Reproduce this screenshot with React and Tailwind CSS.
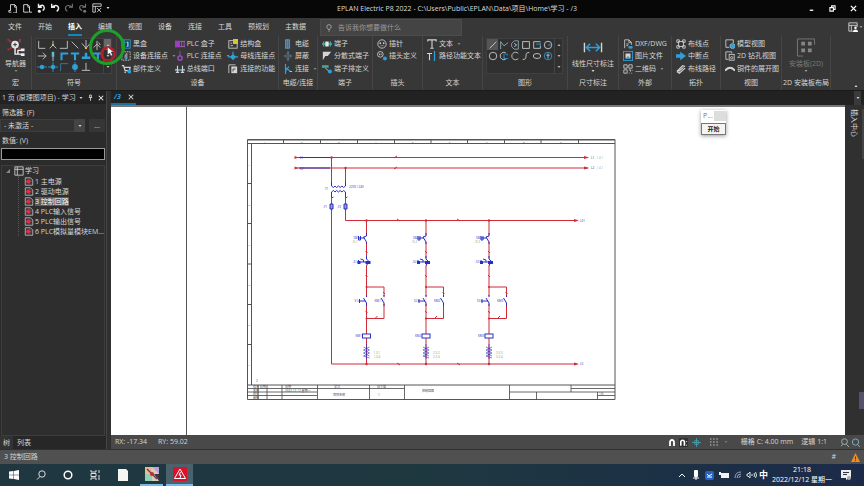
import { useState } from "react";

const menuTabs = ["文件", "开始", "插入", "编辑", "视图", "设备", "连接", "工具", "预规划", "主数据"];

const pages = ["1 主电源", "2 驱动电源", "3 控制回路", "4 PLC输入信号", "5 PLC输出信号", "6 PLC模拟量模块EM..."];

const W = "#d4d4d4";
const B = "#2f9fd8";

// small ribbon glyphs, drawn on a 12 x 12 grid
const glyphs = {
  blackbox: <><rect x="1" y="1" width="10" height="10" stroke={B} /><path d="M4 1v10M4 4h5v5H6" stroke={B} /><path d="M8 3v6" stroke={W} /></>,
  devpoint: <><path d="M1 1h10v10H1z" stroke={W} strokeDasharray="2 1" /><path d="M5 9V5l2-2v6" stroke={W} /><circle cx="6" cy="9" r="1.5" fill={B} stroke="none" /></>,
  part: <><path d="M1 2h2l2 6h5l1-4H4" stroke={W} strokeWidth="1.5" /><circle cx="5" cy="10" r="1" fill={W} stroke="none" /><circle cx="10" cy="9" r="2.4" fill={B} stroke="none" /></>,
  plc: <><rect x="0" y="2" width="6" height="8" fill="#9b3fc0" stroke="none" /><path d="M8 2v8M11 2v8M6 3h6M6 9h6" stroke="#a85cc4" /></>,
  plcpoint: <><path d="M6 0v6" stroke="#a24cc4" /><circle cx="6" cy="8.5" r="2.6" stroke="#a24cc4" strokeWidth="1.6" /></>,
  bus: <><path d="M0 7h12M3 2v8M9 2v8M1 10h4M7 10h4" stroke={W} strokeWidth="1.4" /><path d="M4 7h4" stroke={B} strokeWidth="2" /></>,
  struct: <><rect x="1" y="2" width="10" height="9" stroke={W} /><rect x="6" y="0" width="6" height="6" fill="#d8c437" stroke="none" /><path d="M3 8h3M3 5h2" stroke={W} /></>,
  busbar: <><path d="M0 7h12M6 1v6" stroke={B} strokeWidth="1.5" /><path d="M2 7l4-3 4 3-4 4z" fill={B} stroke="none" /></>,
  func: <><path d="M1 11V1h8" stroke={W} /><rect x="4" y="3" width="7" height="8" fill={W} stroke="none" /><path d="M6 9V6h3" stroke="#333" /></>,
  cable: <><rect x="3" y="1" width="5" height="10" fill="#4d6f8c" stroke="#6f93ad" /><path d="M5.500 0v12" stroke={B} /></>,
  shield: <><path d="M6 0v12M1 6h3M8 6h3" stroke="#6a93b5" /><ellipse cx="6" cy="6" rx="2.500" ry="4" stroke="#5f7f96" strokeDasharray="2 1" /></>,
  conn: <><path d="M3 0v12M3 4l6 5M7 3l-4 6" stroke={B} strokeWidth="1.4" /><path d="M8 9h3" stroke={W} /></>,
  term: <><path d="M0 6h12" stroke="#4aa99c" strokeWidth="2" /><rect x="4" y="3" width="4" height="6" fill="#dfeee9" stroke="none" /><path d="M2 3v6M10 3v6" stroke="#4aa99c" strokeWidth="1.6" /></>,
  dterm: <path d="M1 11V1h10L7 6H4z" fill={W} stroke="none" />,
  termdef: <><path d="M0 3h8" stroke="#4aa99c" strokeWidth="3" /><path d="M4 5l5 4" stroke={W} /><circle cx="9.500" cy="9" r="2.400" fill={B} stroke="none" /></>,
  pin: <><circle cx="6" cy="6" r="5" stroke={W} /><circle cx="4" cy="5" r="1" fill={W} stroke="none" /><circle cx="8" cy="5" r="1" fill={W} stroke="none" /><path d="M4 8h4" stroke="#70b070" /></>,
  plugdef: <><circle cx="4" cy="4" r="3.400" stroke={W} /><path d="M3 3v2M5 3v2" stroke={W} /><circle cx="9.500" cy="9" r="2.400" fill={B} stroke="none" /></>,
  text: <path d="M1 3V1h10v2M6 1v10M4 11h4" stroke={W} strokeWidth="1.3" />,
  pathtext: <><path d="M0 3h6M3 3v8" stroke={W} strokeWidth="1.3" /><path d="M9 0v12" stroke={B} strokeWidth="1.500" /></>,
  dxf: <><path d="M2 11V1h5l3 3v3M7 1v3h3M4 6h3M4 8h2" stroke={W} /><path d="M7 9h4v2H7z" fill={B} stroke={B} /></>,
  image: <><rect x="0.500" y="0.500" width="11" height="11" stroke={B} /><rect x="3" y="3" width="6" height="6" fill={W} stroke="none" /><path d="M3 9l3-3 3 3z" fill={B} stroke="none" /></>,
  qr: <path d="M1 1h4v4H1zM7 1h4v4H7zM1 7h4v4H1zM7 7h2v2M11 7v1M7 11h1M10 11h1" stroke={W} />,
  route: <><path d="M3 3h6v6H3z" stroke={W} /><path d="M1 1h3v3H1zM8 1h3v3H8zM1 8h3v3H1zM8 8h3v3H8z" stroke={W} /></>,
  breakpt: <path d="M0 4h5V1l7 5-7 5V8H0z" fill={B} stroke="none" />,
  path: <path d="M1 9l7-7 3 1M1 9l3 2 7-6M3 9l6-5" stroke={W} strokeWidth="1.4" />,
  model: <><path d="M10 5V1H1v9h4" stroke={W} /><path d="M6 7l3-2 3 2v3l-3 2-3-2z" fill={B} stroke={W} strokeWidth="0.600" /></>,
  drill: <><path d="M8 3V1H1v9h3" stroke={W} /><rect x="5" y="4" width="6" height="7" stroke={W} /><circle cx="8" cy="8" r="1.300" stroke={W} /></>,
  copper: <path d="M0 8q6-7 12 0" stroke={W} strokeWidth="2.200" />,
};

const Glyph = ({ name }) => (
  <svg viewBox="0 0 12 12" className="h-[10px] w-[10px] shrink-0" fill="none" aria-hidden="true">
    {glyphs[name]}
  </svg>
);

const Caret = ({ className = "" }) => (
  <svg viewBox="0 0 6 4" className={`h-[2px] w-[4px] shrink-0 ${className}`} aria-hidden="true">
    <path d="M0 0h6L3 4z" fill="currentColor" />
  </svg>
);

const Tool = ({ icon, label, caret }) => (
  <button className="flex items-center gap-[2px] whitespace-nowrap text-left">
    <Glyph name={icon} />
    <span>{label}</span>
    {caret && <Caret className="ml-[2px] text-[#888]" />}
  </button>
);

const Group = ({ label, children }) => (
  <section className="flex min-w-0 flex-col border-r border-[#464646] pt-[2px]">
    <div className="h-[37px]">{children}</div>
    <div className="pt-[3px] text-center leading-[10px] whitespace-nowrap">{label}</div>
  </section>
);

const ToolColumn = ({ tools }) => (
  <div className="grid h-full grid-rows-3 pl-[4px]">
    {tools.map(([icon, label, caret]) => (
      <Tool key={label} icon={icon} label={label} caret={caret} />
    ))}
  </div>
);

const symbols = [
  <path d="M2 1v9h8" stroke={W} />,
  <><path d="M6 1v5l-4 4M6 6l4 4" stroke={W} /><circle cx="6" cy="6" r="1.300" fill="#ddc65e" stroke="none" /></>,
  <path d="M10 1v9H1" stroke={W} />,
  <path d="M2 2l8 8" stroke={W} />,
  <><path d="M6 0v10M1 4l5 6 5-6" stroke={W} /><circle cx="6" cy="10" r="1.200" fill="#ddc65e" stroke="none" /></>,
  <path d="M6 1v11M2 9l4-4 4 4M8 3l2 3" stroke={W} />,
  <path d="M1 6h10M7 2l4 4-4 4" stroke={W} />,
  <><path d="M6 1v6" stroke="#62bdd0" strokeWidth="3" /><path d="M6 7v5" stroke={W} /></>,
  <path d="M11 3H3v8" stroke={B} strokeWidth="2.500" />,
  <path d="M1 3h10M6 3v8" stroke={B} strokeWidth="2.500" />,
  <path d="M1 8h10M6 2v6" stroke={B} strokeWidth="3" />,
  <path d="M1 3h10M7 3v8" stroke={B} strokeWidth="2.500" />,
  <><path d="M0 6h12" stroke={B} /><circle cx="6" cy="6" r="2.700" fill={B} stroke="none" /></>,
  <><path d="M0 6h12M6 0v12" stroke={B} /><circle cx="6" cy="6" r="2.700" fill={B} stroke="none" /></>,
  <path d="M2 11V2h9" stroke="#3986a8" />,
  <><path d="M6 0v12" stroke={B} /><circle cx="6" cy="6" r="3.500" fill={B} stroke="none" /></>,
  <path d="M6 1v9M1 10h10" stroke={W} />,
];

const shapes = [
  <path d="M2 10l8-8" stroke={W} />,
  <path d="M2 11V2l4 5 5-4" stroke="#8fb6c4" />,
  <><path d="M10 1v10H5L2 8V4l3-3z" stroke="#8ab5c8" /><path d="M5 4l3 2-3 2" stroke={W} /></>,
  <rect x="2" y="2" width="8" height="8" stroke={W} />,
  <><path d="M10 2H2v8h8V7" stroke={W} /><path d="M5 5h5M10 3v4" stroke={B} /></>,
  <><circle cx="6" cy="6" r="4.500" stroke={W} /><path d="M6 6h5" stroke={B} /></>,
  <circle cx="6" cy="6" r="4.500" stroke={W} />,
  <><path d="M8 2a4.500 4.500 0 1 0 0 8" stroke={W} /><path d="M6 3v6h5M7 3l4 2" stroke={B} /></>,
  <path d="M10 3a4.500 4.500 0 1 0 0 6" stroke={W} />,
  <path d="M2 10q4 1 4-4t4-4" stroke={W} />,
  <ellipse cx="6" cy="6" rx="4.500" ry="3" stroke={W} />,
  <><circle cx="6" cy="6" r="4.500" stroke={B} /><path d="M6 3v6M4 5h4" stroke="#b8d2dc" /></>,
];

const Gallery = ({ items, label, activeUp, activeFirst }) => (
  <div className="mr-[4px] ml-[3px] flex h-[36px] border border-[#404040] bg-[#303030]">
    <div className="grid flex-1 grid-cols-6 grid-rows-3">
      {items.map((item, i) => (
        <button
          key={i}
          aria-label={`${label} ${i + 1}`}
          className={`flex items-center justify-center ${activeFirst && i === 0 ? "bg-[#555]" : ""}`}
        >
          <svg viewBox="0 0 12 12" className="h-[10px] w-[10px]" fill="none">{item}</svg>
        </button>
      ))}
    </div>
    <div className="grid w-[8px] grid-rows-3 border-l border-[#444] text-[#bbb]">
      <button aria-label={`${label}上`} className={`flex items-center justify-center ${activeUp ? "bg-[#686868]" : ""}`}><Caret className="rotate-180" /></button>
      <button aria-label={`${label}下`} className="flex items-center justify-center"><Caret /></button>
      <button aria-label={`${label}更多`} className="flex items-center justify-center"><Caret /></button>
    </div>
  </div>
);

const quickIcons = [
  ["新建", <path d="M4 11H1V9h2V2h5l2 2v8H6M8 2v3h2" stroke="#eee" />],
  ["打开", <path d="M8 11H2V2h5l2 2v7M9 11h3M7 2v3h2" stroke="#eee" />],
  ["撤消列表", <><path d="M3 1v4h4M3 5q6-5 7 1 0 2-2 3" stroke="#eee" strokeWidth="1.700" /><circle cx="4" cy="10" r="1.800" fill="#eee" /></>],
  ["撤消", <path d="M2 1v4h4M2 5q6-4 8 0 1 3-2 5" stroke="#eee" strokeWidth="1.700" />],
  ["恢复", <path d="M10 1v4H6M10 5Q4 1 2 5q-1 3 2 5" stroke="#777" strokeWidth="1.300" />],
  ["恢复列表", <><path d="M9 1v4H5M9 5Q3 1 2 5q0 3 3 4" stroke="#777" strokeWidth="1.300" /><circle cx="8" cy="10" r="1.800" fill="#777" /></>],
  ["属性", <path d="M11 4V1H1v10h3M1 4h10M4 4v7M6 6l5 5M11 6l-5 5" stroke="#ddd" />],
];

const TitleBar = () => (
  <header className="flex h-[18px] shrink-0 items-center bg-[#070707] pb-[2px] text-[#dcdcdc]">
    <div className="flex w-[248px] items-center gap-[4px] pl-[8px]">
      {quickIcons.map(([label, art]) => (
        <button key={label} aria-label={label}>
          <svg viewBox="0 0 12 12" className="h-[10px] w-[10px]" fill="none">{art}</svg>
        </button>
      ))}
      <Caret />
    </div>
    <h1 className="flex-1 pt-[2px] text-center whitespace-nowrap">
      EPLAN Electric P8 2022 - C:\Users\Public\EPLAN\Data\项目\Home\学习 - /3
    </h1>
    <div className="flex w-[198px] items-center justify-end gap-[14px] pr-[7px]">
      <button aria-label="最小化"><svg viewBox="0 0 8 8" className="h-[7px] w-[7px]"><path d="M2 6h4" stroke="#fff" strokeWidth="1.500" /></svg></button>
      <button aria-label="还原"><svg viewBox="0 0 8 8" className="h-[7px] w-[7px]" fill="none"><path d="M3 3V1h4v4H5M1 3h4v4H1z" stroke="#fff" strokeWidth="1.200" /></svg></button>
      <button aria-label="关闭"><svg viewBox="0 0 8 8" className="h-[7px] w-[7px]"><path d="M1 1l6 6M7 1L1 7" stroke="#fff" strokeWidth="1.500" /></svg></button>
    </div>
  </header>
);

const MenuBar = ({ active, onSelect }) => (
  <div className="flex h-[18px] shrink-0 items-stretch bg-[#373737]">
    <nav className="flex gap-[16px] pr-[14px] pl-[8px]">
      {menuTabs.map((tab) => (
        <button
          key={tab}
          onClick={() => onSelect(tab)}
          className={`border-b-2 pt-px whitespace-nowrap ${tab === active ? "border-[#1684c4] font-bold text-white" : "border-transparent"}`}
        >
          {tab}
        </button>
      ))}
    </nav>
    <label className="mt-px flex w-[142px] items-center gap-[6px] border border-[#4c4c4c] bg-[#444] pl-[5px]">
      <svg viewBox="0 0 8 10" className="h-[8px] w-[6px]" fill="none"><path d="M3 7V6Q1 5 1 3.500a3 3 0 0 1 6 0Q7 5 5 6v1zM3 9h2" stroke="#bbb" /></svg>
      <input aria-label="搜索" placeholder="告诉我你想要做什么" className="min-w-0 flex-1 bg-transparent outline-none placeholder:text-[#9a9a9a]" />
    </label>
    <button aria-label="工作区域" className="ml-auto flex items-center gap-px pr-px text-[#999]">
      <svg viewBox="0 0 12 12" className="h-[10px] w-[10px]" fill="none"><path d="M1 1h10v5M1 1v10h5M1 4h10M4 4v7" stroke="#ddd" /><circle cx="9" cy="7" r="1.500" fill="#fff" /><path d="M6 12q0-3 3-3t3 3z" fill="#fff" /></svg>
      <Caret />
    </button>
  </div>
);

const Ribbon = () => (
  <div className="relative grid h-[54px] shrink-0 grid-cols-[32fr_85fr_162fr_39fr_55fr_50fr_60fr_85fr_51fr_53fr_49fr_61fr_49fr_33fr] bg-[#373737]">
    <Group label="宏">
      <button className="flex h-full w-full flex-col items-center">
        <svg viewBox="0 0 20 20" className="h-[19px] w-[20px]" fill="none">
          <path d="M1 2h3M13 2h3M1 12h3M3 3l12 9M15 3L3 12" stroke="#b52d39" strokeWidth="2" strokeDasharray="2 2" />
          <circle cx="9" cy="7" r="4" fill="#e5e5e5" /><path d="M7 7h4M9 5v4" stroke="#333" />
          <path d="M9 10v7h6M12 17v-4h4" stroke="#eee" strokeWidth="1.500" />
          <path d="M15 11h4v3h-4zM15 16h4v3h-4z" fill="#eee" />
        </svg>
        <span className="mt-[2px] whitespace-nowrap leading-[9px]">导航器</span>
        <Caret className="mt-[2px] text-[#888]" />
      </button>
    </Group>
    <Group label="符号"><Gallery items={symbols} label="符号" activeUp /></Group>
    <Group label="设备">
      <div className="grid h-full grid-cols-3">
        <ToolColumn tools={[["blackbox", "黑盒"], ["devpoint", "设备连接点", true], ["part", "部件定义"]]} />
        <ToolColumn tools={[["plc", "PLC 盒子"], ["plcpoint", "PLC 连接点", true], ["bus", "总线端口"]]} />
        <ToolColumn tools={[["struct", "结构盒"], ["busbar", "母线连接点"], ["func", "连接的功能"]]} />
      </div>
    </Group>
    <Group label="电缆/连接">
      <ToolColumn tools={[["cable", "电缆"], ["shield", "屏蔽"], ["conn", "连接", true]]} />
    </Group>
    <Group label="端子">
      <ToolColumn tools={[["term", "端子"], ["dterm", "分散式端子"], ["termdef", "端子排定义"]]} />
    </Group>
    <Group label="插头">
      <ToolColumn tools={[["pin", "插针"], ["plugdef", "插头定义"]]} />
    </Group>
    <Group label="文本">
      <ToolColumn tools={[["text", "文本", true], ["pathtext", "路径功能文本"]]} />
    </Group>
    <Group label="图形"><Gallery items={shapes} label="图形" activeFirst /></Group>
    <Group label="尺寸标注">
      <button className="flex h-full w-full flex-col items-center">
        <svg viewBox="0 0 20 20" className="h-[19px] w-[20px]" fill="none">
          <path d="M1 5v10M19 5v10" stroke={W} strokeWidth="1.500" />
          <path d="M3 10h14M7 6l-4 4 4 4M13 6l4 4-4 4" stroke={B} strokeWidth="1.600" />
        </svg>
        <span className="mt-[2px] whitespace-nowrap leading-[9px]">线性尺寸标注</span>
        <Caret className="mt-[2px]" />
      </button>
    </Group>
    <Group label="外部">
      <ToolColumn tools={[["dxf", "DXF/DWG"], ["image", "图片文件"], ["qr", "二维码", true]]} />
    </Group>
    <Group label="拓扑">
      <ToolColumn tools={[["route", "布线点"], ["breakpt", "中断点"], ["path", "布线路径"]]} />
    </Group>
    <Group label="视图">
      <ToolColumn tools={[["model", "模型视图"], ["drill", "2D 钻孔视图"], ["copper", "铜件的展开图"]]} />
    </Group>
    <Group label="2D 安装板布局">
      <button className="flex h-full w-full flex-col items-center text-[#777]">
        <svg viewBox="0 0 20 20" className="h-[19px] w-[20px]" fill="none">
          <path d="M1 19V1h18v6M1 19h6" stroke="#777" />
          <path d="M5 4h4v4H5zM12 4h4v4h-4zM5 11h4v4H5zM12 11h4v4h-4z" fill="#858585" />
        </svg>
        <span className="mt-[2px] whitespace-nowrap leading-[9px]">安装板(2D)</span>
        <Caret className="mt-[2px] text-[#999]" />
      </button>
    </Group>
    <div className="flex items-end justify-end pr-[6px] pb-[3px]">
      <button aria-label="折叠功能区"><Caret className="rotate-180" /></button>
    </div>

    {/* click highlight and pointer */}
    <svg viewBox="0 0 40 40" className="pointer-events-none absolute top-[-9px] left-[87px] z-10 h-[40px] w-[40px]" fill="none">
      <circle cx="20" cy="20" r="16.500" stroke="#1d9f2a" strokeWidth="3" />
      <circle cx="21" cy="27" r="6.500" stroke="#b3202c" strokeWidth="2.500" />
      <path d="M20.500 20v8l2-2 1.500 3 1.500-1-1.500-3h2.500z" fill="#fff" stroke="#333" strokeWidth="0.400" />
    </svg>
  </div>
);

const PageIcon = () => (
  <svg viewBox="0 0 12 12" className="h-[9px] w-[10px] shrink-0" fill="none">
    <path d="M1 1h7l3 3v7H1z" fill="#3b3b3b" stroke="#c9c9c9" />
    <path d="M2 6h7M4 4v4M6 3v6" stroke="#f02848" strokeWidth="2" />
  </svg>
);

const PagePanel = () => {
  const [current, setCurrent] = useState(2);

  return (
    <aside className="flex w-[107px] shrink-0 flex-col border-r border-[#454545] bg-[#2b2b2b]">
      <div className="flex h-[13px] items-center bg-[#222] pr-[2px] pl-[2px]">
        <h2 className="flex-1 whitespace-nowrap">1 页 (原理图项目) - 学习</h2>
        <button aria-label="菜单" className="mr-[5px]"><Caret /></button>
        <button aria-label="固定" className="mr-[5px]"><svg viewBox="0 0 6 8" className="h-[7px] w-[5px]" fill="none"><path d="M1 4h4M2 4V1h2v3M3 4v4" stroke="#ddd" /></svg></button>
        <button aria-label="关闭面板"><svg viewBox="0 0 8 8" className="h-[6px] w-[6px]"><path d="M1 1l6 6M7 1L1 7" stroke="#eee" strokeWidth="1.400" /></svg></button>
      </div>
      <label htmlFor="filter" className="pt-[3px] pl-[2px] leading-[11px]">筛选器: (F)</label>
      <div className="mt-px flex h-[13px] gap-[4px] pr-px">
        <div className="relative flex-1">
          <select id="filter" className="h-full w-full appearance-none border border-[#3d3d3d] bg-[#333] pl-[3px] outline-none">
            <option>- 未激活 -</option>
          </select>
          <span className="pointer-events-none absolute inset-y-0 right-0 flex w-[11px] items-center justify-center bg-[#444]"><Caret /></span>
        </div>
        <button aria-label="筛选器设置" className="w-[16px] bg-[#363636]">...</button>
      </div>
      <label htmlFor="value" className="pt-[3px] pl-[2px] leading-[11px]">数值: (V)</label>
      <input id="value" className="mx-px mt-[2px] h-[12px] min-w-0 border border-[#999] bg-black px-[2px] outline-none" />
      <div className="mx-px mt-[5px] min-h-0 flex-1 border border-[#3d3d3d] bg-[#2e2e2e]">
        <div className="flex h-[10px] items-center">
          <svg viewBox="0 0 6 6" className="mr-[4px] ml-[4px] h-[4px] w-[4px]"><path d="M6 0v6H0z" fill="#888" /></svg>
          <svg viewBox="0 0 12 12" className="mr-px h-[10px] w-[10px]" fill="none"><path d="M1 1h10v10H1zM1 4h10M4 1v10" stroke={W} /></svg>
          <span>学习</span>
        </div>
        <ul className="ml-[16px] border-l border-dotted border-[#555]">
          {pages.map((page, i) => (
            <li key={page} className="h-[10px]">
              <button onClick={() => setCurrent(i)} className="flex h-[10px] items-center gap-px pl-[5px] leading-[9px] whitespace-nowrap">
                <PageIcon />
                <span className={i === current ? "bg-[#5a5a5a] text-white" : ""}>{page}</span>
              </button>
            </li>
          ))}
        </ul>
      </div>
      <div className="flex h-[13px] items-stretch bg-[#272727]">
        <button className="bg-[#333] px-[3px]">树</button>
        <button className="px-[4px]">列表</button>
      </div>
    </aside>
  );
};

const RED = "#cf2b38";
const BLUE = "#2b2fbf";

// one relay branch; x is the main conductor
const Branch = ({ x, k }) => (
  <g>
    <path d={`M${x} 220V364M${x} 287h17.500V318.500H${x}`} stroke={RED} />
    <path d={`M${x} 235v7M${x} 258v8M${x} 296v8M${x + 17.5} 296v8`} stroke="#fff" strokeWidth="1.600" />
    <path d={`M${x} 233v3l-3 1 3 5v2M${x - 8} 238h6M${x - 8} 236v4h2v-4M${x} 256v3l2 2-2 5M${x - 9} 262h12M${x - 8} 260v4M${x - 6} 259l3 1v2`} stroke={BLUE} />
    <path d={`M${x - 1} 261h5v3h-5zM${x - 9} 261h3v3h-3z`} fill={BLUE} stroke="none" />
    <path d={`M${x} 295v2M${x - 3} 298l3 5v3M${x - 8} 301h7M${x - 7} 299v4M${x + 17.5} 295v2M${x + 14.5} 298l3 5v3`} stroke={BLUE} />
    <rect x={x - 4} y="334" width="8" height="4" fill="#fff" stroke={BLUE} />
    <path d={`M${x - 3} 347l6 3M${x - 3} 350l6 3M${x - 3} 353l6 3M${x - 3} 356l6 2M${x + 3} 347l-6 3M${x + 3} 350l-6 3M${x + 3} 353l-6 3M${x} 344v15`} stroke={BLUE} strokeWidth="0.600" />
    <path d={`M${x - 1} 251l2 2M${x - 1} 275l2 2M${x - 1} 311l2 2M${x + 9} 318l2-2M${x + 16.5} 292l2 2`} stroke={RED} />
    <g fill={RED} stroke="none">
      <circle cx={x} cy="220.500" r="1.200" /><circle cx={x} cy="287" r="1" /><circle cx={x} cy="318.500" r="1" /><circle cx={x} cy="364" r="1.200" />
    </g>
    <g fill={BLUE} stroke="none" fontSize="3">
      <text x={x - 13} y="239">SB{k}</text>
      <text x={x - 14} y="263">-S{k}</text>
      <text x={x - 12} y="302">S{k}</text>
      <text x={x + 8} y="302">KM{k}</text>
      <text x={x - 11} y="337">KM{k}</text>
    </g>
    <g fill="#7da36a" stroke="none" fontSize="3">
      <text x={x - 14} y="243">/5.{k}</text>
      <text x={x + 7} y="354">{k}.3.{k}</text>
      <text x={x + 7} y="358">{k}.3.4</text>
    </g>
  </g>
);

const Schematic = () => (
  <svg viewBox="111 107 734 328" className="min-h-0 w-full flex-1 basis-0 bg-white" fill="none" role="img" aria-label="控制回路">
    <path d="M186.500 107v328" stroke="#555" />

    {/* sheet frame */}
    <g stroke="#555">
      <path d="M247.500 139.500h367.500V399.500H247.500zM247.500 143.500h367.500M251.500 143.500V385M247.500 385h367.500" />
      <path d="M247.500 140.500h367.500" strokeWidth="0.500" />
      <path d="M283.500 139v4.500M320.500 139v4.500M357.500 139v4.500M394.500 139v4.500M431 139v4.500M467.500 139v4.500M504.500 139v4.500M541 139v4.500M578.500 139v4.500M247 183.500h4.500M247 223.500h4.500M247 264h4.500M247 304.500h4.500M247 344.500h4.500" />
    </g>
    <g stroke="#444" strokeWidth="0.800">
      <path d="M247 388.500h70M247 392h70M247 395.500h70M258 385v14M267 385v14M282 385v14M317.500 385v14.500M369.500 385v14.500M404.500 385v14.500M317.500 388.500h87M509.500 385v14.500M509.500 392h105.500M571 385v7M571 388.500h44M536.500 392v7.500M597.500 392v7.500M597.500 395.500h17.500" />
    </g>
    <g fill="#444" fontSize="3">
      {[1, 2, 3, 4, 5, 6, 7, 8, 9].map((n) => <text key={n} x={227 + n * 37} y="142.800" fontSize="2.500">{n}</text>)}
      {["A", "B", "C", "D", "E", "F"].map((c, i) => <text key={c} x="248.500" y={166 + i * 40} fontSize="2.500">{c}</text>)}
      <text x="256" y="382">2</text>
      <text x="253" y="388">修改 日期</text><text x="253" y="391.500">名称</text><text x="253" y="395">校对</text><text x="253" y="398.800">审核</text>
      <text x="285" y="388">日期</text><text x="285" y="391.500">2022-12-12 星期一</text>
      <text x="334" y="388">学习</text><text x="377" y="388">日文版</text>
      <text x="333" y="395.500">项目名称</text><text x="378" y="396">1</text><text x="422" y="392">控制回路</text>
      <text x="599" y="395">1/6</text>
    </g>

    {/* supply rails and transformer */}
    <g stroke={RED}>
      <path d="M295 157.500H588M295 168H588M331.500 157.500V186M345.500 168V186M331.500 196V364H577M345.500 196v24.500H577" />
      <path d="M394 158l3-2M394 169l3-2M397 219l3 2M457 219l3 2M397 363l3 2M457 363l3 2M331.500 198l2-1M345.500 198l2-1" />
    </g>
    <g stroke={BLUE}>
      <path d="M299 157.500h31M299 168h31M331.500 182v4q2 3 3.500 0 1.500 3 3.500 0 1.500 3 3.500 0 1.500 3 3.500 0v-4M331.500 197v-5q2-3 3.500 0 1.500-3 3.500 0 1.500-3 3.500 0 1.500-3 3.500 0v5" />
      <path d="M330 204h3v5h-3zM344 204h3v5h-3z" fill="#9a9add" />
    </g>
    <g fill={RED}>
      <path d="M294.500 156v3l4-1.500zM294.500 166.500v3l4-1.500zM584 156v3l5-1.500zM584 166.500v3l5-1.500zM574 219v3l5-1.500zM574 362.500v3l5-1.500z" />
      <circle cx="331.500" cy="157.500" r="1.200" /><circle cx="345.500" cy="168" r="1.200" />
    </g>
    <g fill={BLUE} fontSize="3">
      <text x="300" y="159">L1</text><text x="300" y="169.500">L2</text>
      <text x="324" y="190">-T1</text><text x="349" y="188">220V / 24V</text>
      <text x="323" y="208">-F1</text><text x="337" y="208">-F2</text>
      <text x="591" y="158.500">L1</text><text x="591" y="169">L2</text>
      <text x="580" y="221.500">L01</text><text x="580" y="365">L0</text>
    </g>
    <g fill="#8fae70" fontSize="3"><text x="597" y="158.500">/ 4.1</text><text x="597" y="169">/ 4.1</text></g>

    <Branch x={366.5} k={1} />
    <Branch x={426} k={2} />
    <Branch x={489} k={3} />
  </svg>
);

const StatusLine = () => (
  <div className="flex h-[14px] shrink-0 items-center bg-[#494949] pr-[4px] pl-[4px]">
    <span className="w-[43px] whitespace-nowrap">RX: -17.34</span>
    <span className="whitespace-nowrap">RY: 59.02</span>
    <div className="ml-auto flex items-center">
      <button aria-label="捕捉" className="mr-[3px]"><svg viewBox="0 0 8 9" className="h-[9px] w-[8px]" fill="none"><path d="M2 8V4a2 2 0 0 1 4 0v4" stroke="#fff" strokeWidth="1.800" /></svg></button>
      <button aria-label="栅格捕捉" className="mr-[4px] bg-[#303030]"><svg viewBox="0 0 10 9" className="h-[9px] w-[9px]" fill="none"><path d="M2 8V4a2 2 0 0 1 4 0v4" stroke="#fff" strokeWidth="1.800" /><path d="M8.500 3v1M8.500 7v1" stroke="#fff" /></svg></button>
      <button aria-label="对象捕捉" className="mr-[9px]"><svg viewBox="0 0 10 10" className="h-[9px] w-[9px]" fill="none"><path d="M5 0v10M0 5h10M3 3h4v4H3z" stroke="#3f9fae" /></svg></button>
      <button aria-label="栅格" className="mr-[6px]"><svg viewBox="0 0 8 8" className="h-[8px] w-[8px]"><path d="M0 1h8M0 4h8M0 7h8" stroke="#ccc" strokeWidth="1.200" strokeDasharray="1.400 1.800" /></svg></button>
      <Caret className="mr-[13px] text-[#777]" />
      <span className="mr-[8px] whitespace-nowrap">栅格 C: 4.00 mm</span>
      <span className="mr-[13px] whitespace-nowrap">逻辑 1:1</span>
      <button aria-label="缩小" className="mr-[2px]"><svg viewBox="0 0 10 10" className="h-[9px] w-[9px]" fill="none"><circle cx="5" cy="4" r="3.200" stroke="#a9b9bd" /><path d="M7 7l3 3M1 9l2-2" stroke="#a9b9bd" /></svg></button>
      <button aria-label="放大"><svg viewBox="0 0 10 10" className="h-[9px] w-[9px]" fill="none"><circle cx="5" cy="4.500" r="3.500" stroke="#7fb6c9" /><path d="M7 7l3 3" stroke="#7fb6c9" /></svg></button>
    </div>
  </div>
);

const Editor = () => (
  <main className="flex min-w-0 flex-1 flex-col">
    <div className="flex h-[14px] shrink-0 items-stretch justify-between bg-[#222]">
      <div className="flex w-[25px] items-center gap-[7px] border-b-2 border-[#1a6f9f] pl-[3px]">
        <a href="#page-3" className="font-bold text-[#2f9fd8] italic">/3</a>
        <button aria-label="关闭页"><svg viewBox="0 0 8 8" className="h-[6px] w-[6px]"><path d="M1 1l6 6M7 1L1 7" stroke="#ddd" strokeWidth="1.400" /></svg></button>
      </div>
      <button aria-label="页列表" className="mr-[3px] flex w-[7px] items-center justify-center bg-[#3a3a3a]"><Caret /></button>
    </div>
    <div className="flex min-h-0 flex-1">
      <div className="relative flex min-w-0 flex-1 flex-col border-t-2 border-[#777]">
        <Schematic />
        <div className="absolute top-[3px] right-[119px] w-[25px] shadow-[0_1px_4px_#999]">
          <div className="flex h-[12px] items-center bg-white text-[#777]">
            <span className="flex-1 pl-[2px]">P...</span>
            <span className="h-[10px] w-[12px] bg-[#ddd]" />
          </div>
          <button className="mt-px h-[12px] w-full border border-[#777] bg-[#f4f4f4] text-[6px] leading-[9px] font-bold text-[#222]">开始</button>
        </div>
      </div>
      <div className="flex w-[19px] shrink-0 flex-col items-end bg-[#303030] pt-[4px]">
        <div className="flex h-[50px] w-[16px] border-r-2 border-[#444]">
          <button className="h-[28px] leading-[12px] whitespace-nowrap [writing-mode:vertical-rl] [text-orientation:sideways]">插入中心</button>
        </div>
        <div className="mt-auto mb-[26px] h-[17px] w-[5px] bg-[#52526a]" />
      </div>
    </div>
    <StatusLine />
  </main>
);

const Taskbar = () => (
  <footer className="flex h-[22px] shrink-0 items-stretch bg-gradient-to-r from-[#203740] via-[#1e3840] to-[#1c2a49] text-white">
    <button aria-label="开始菜单" className="flex w-[27px] items-center justify-center">
      <svg viewBox="0 0 10 10" className="h-[10px] w-[10px]"><path d="M0 1.500L4.500 1v3.700H0zM5 1l5-1v4.700H5zM0 5.200h4.500V9L0 8.500zM5 5.200h5V10L5 9z" fill="#fff" /></svg>
    </button>
    <button aria-label="搜索" className="flex w-[27px] items-center justify-center">
      <svg viewBox="0 0 10 10" className="h-[10px] w-[10px]" fill="none"><circle cx="6" cy="4" r="3.200" stroke="#ddd" /><path d="M4 6.500L1 9.500" stroke="#ddd" /></svg>
    </button>
    <button aria-label="Cortana" className="flex w-[27px] items-center justify-center">
      <svg viewBox="0 0 10 10" className="h-[10px] w-[10px]" fill="none"><circle cx="5" cy="5" r="3.800" stroke="#fff" strokeWidth="1.500" /></svg>
    </button>
    <button aria-label="任务视图" className="flex w-[27px] items-center justify-center">
      <svg viewBox="0 0 10 10" className="h-[10px] w-[10px]" fill="none"><path d="M1 0v2h5V0M1 10V8h5v2M1 3.500h5v3H1zM9 0v3M9 5v5" stroke="#ddd" /></svg>
    </button>
    <button aria-label="文档" className="flex w-[30px] items-center justify-center">
      <svg viewBox="0 0 10 12" className="h-[12px] w-[10px]"><path d="M0 0h8l2 2v10H0z" fill="#f4f6f4" /></svg>
    </button>
    <button aria-label="画图" className="ml-[2px] flex w-[23px] items-center justify-center border-b-2 border-[#76b9e8]">
      <svg viewBox="0 0 14 14" className="h-[14px] w-[14px]"><path d="M0 0h14v14H0z" fill="#d8d0b0" /><path d="M0 0h7v7H0z" fill="#ecb98f" /><path d="M7 0h7v7z" fill="#b9a0de" /><path d="M0 7h7v7H0z" fill="#8fcfb4" /><path d="M9 7h5v7z" fill="#3b3b44" /><path d="M2 2l10 10" stroke="#6b2f50" strokeWidth="1.200" /><circle cx="7" cy="7" r="2" fill="#c82a3c" /></svg>
    </button>
    <button aria-label="EPLAN" className="ml-[3px] flex w-[27px] items-center justify-center border-b-2 border-[#76b9e8] bg-[#4b626d]">
      <svg viewBox="0 0 14 14" className="h-[14px] w-[14px]" fill="none"><rect width="14" height="14" rx="1" fill="#dc1029" /><path d="M7 2l5.500 9.500h-11zM7.500 5L6 8h2l-1 3" stroke="#fff" /></svg>
    </button>

    <div className="ml-auto flex items-center">
      <button aria-label="显示隐藏的图标" className="mr-[6px]"><svg viewBox="0 0 8 6" className="h-[6px] w-[8px]" fill="none"><path d="M1 5l3-3 3 3" stroke="#fff" /></svg></button>
      <button aria-label="麦克风" className="mr-[5px]"><svg viewBox="0 0 8 10" className="h-[10px] w-[8px]" fill="none"><rect x="2" width="4" height="7" rx="1" fill="#fff" /><path d="M1 8h6M4 7v3" stroke="#fff" /></svg></button>
      <button aria-label="同步" className="mr-[5px]"><svg viewBox="0 0 9 9" className="h-[9px] w-[9px]" fill="none"><rect width="9" height="9" rx="2" fill="#2563c9" /><path d="M2 3l2 2 3-2M2 6h5" stroke="#fff" /></svg></button>
      <button aria-label="电池" className="mr-[5px]"><svg viewBox="0 0 10 8" className="h-[8px] w-[10px]"><path d="M0 1h2v1h8v5H2V4H0z" fill="#f2f2f2" /></svg></button>
      <button aria-label="网络" className="mr-[4px]"><svg viewBox="0 0 8 8" className="h-[8px] w-[8px]" fill="none"><path d="M1 7q0-6 6-6M3 7q0-4 4-4M5 7q0-2 2-2" stroke="#9aa5b5" /></svg></button>
      <button aria-label="音量" className="mr-[2px]"><svg viewBox="0 0 11 8" className="h-[8px] w-[11px]" fill="none"><path d="M1 3h1l2-2v6L2 5H1zM6 3v2M8 2q1 2 0 4M9.500 1q2 3 0 6" stroke="#ddd" /></svg></button>
      <button className="mr-[4px] text-[9px] leading-[12px] font-bold">中</button>
      <div className="mr-[9px] text-center text-[7px] leading-[10px] whitespace-nowrap">
        <div>21:18</div>
        <div>2022/12/12 星期一</div>
      </div>
      <button aria-label="通知" className="mr-[13px]"><svg viewBox="0 0 10 10" className="h-[10px] w-[10px]" fill="none"><path d="M0 0h10v8H8L5 10V8H0z" fill="#eee" /><path d="M2 2.500h6M2 4.500h4" stroke="#334" /><circle cx="8" cy="8" r="2" fill="#aaa" /></svg></button>
    </div>
  </footer>
);

const App = () => {
  const [activeTab, setActiveTab] = useState("插入");

  return (
    <div className="flex h-screen flex-col overflow-hidden bg-[#2b2b2b] font-['Open_Sans','Noto_Sans_CJK_SC',sans-serif] text-[7px] leading-[10px] text-[#d6d6d6]">
      <TitleBar />
      <MenuBar active={activeTab} onSelect={setActiveTab} />
      <Ribbon />
      <div className="flex min-h-0 flex-1 border-t border-[#1a1a1a]">
        <PagePanel />
        <div className="w-[4px] shrink-0 bg-[#303030]" />
        <Editor />
      </div>
      <div className="flex h-[15px] shrink-0 items-center border-t border-[#303030] bg-[#505050] pr-[4px] pl-[4px]">
        <span>3 控制回路</span>
        <span className="mr-[15px] ml-auto">#</span>
        <svg viewBox="0 0 10 10" className="h-[9px] w-[9px]"><path d="M5 0l5 10H0z" fill="#f08a24" /><path d="M5 4v3M5 8v1" stroke="#4a2a08" /></svg>
      </div>
      <Taskbar />
    </div>
  );
};

export default App;
